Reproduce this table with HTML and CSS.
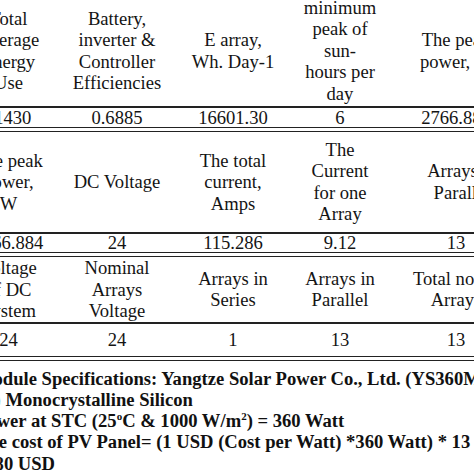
FILE: index.html
```html
<!DOCTYPE html>
<html>
<head>
<meta charset="utf-8">
<link rel="stylesheet" href="styles.css">
</head>
<body>
<div class="page">
  <div class="sheet">
    <div class="tbl t1">
      <div class="c h k0">Total Average Energy Use</div>
      <div class="c h k1">Battery, inverter &amp; Controller Efficiencies</div>
      <div class="c h k2">E array, Wh. Day-1</div>
      <div class="c h k3">minimum peak of sun-hours per day</div>
      <div class="c h k4">The peak power, W</div>
      <div class="rule"></div>
      <div class="c v k0">11430</div>
      <div class="c v k1">0.6885</div>
      <div class="c v k2">16601.30</div>
      <div class="c v k3">6</div>
      <div class="c v k4">2766.884</div>
      <div class="rule2"></div>
    </div>
    <div class="tbl t2">
      <div class="c h k0">The peak power, W</div>
      <div class="c h k1">DC Voltage</div>
      <div class="c h k2">The total current, Amps</div>
      <div class="c h k3">The Current for one Array</div>
      <div class="c h k4 shift">Arrays in Parallel</div>
      <div class="rule"></div>
      <div class="c v k0">2766.884</div>
      <div class="c v k1">24</div>
      <div class="c v k2">115.286</div>
      <div class="c v k3">9.12</div>
      <div class="c v k4">13</div>
      <div class="rule2"></div>
    </div>
    <div class="tbl t3">
      <div class="c h k0">Voltage of DC System</div>
      <div class="c h k1">Nominal Arrays Voltage</div>
      <div class="c h k2">Arrays in Series</div>
      <div class="c h k3">Arrays in Parallel</div>
      <div class="c h k4">Total no. of Arrays</div>
      <div class="rule"></div>
      <div class="c v k0">24</div>
      <div class="c v k1">24</div>
      <div class="c v k2">1</div>
      <div class="c v k3">13</div>
      <div class="c v k4">13</div>
      <div class="rule2"></div>
    </div>
  </div>
  <div class="notes">
    <div class="line">Module Specifications: Yangtze Solar Power Co., Ltd. (YS360M-</div>
    <div class="line">72) Monocrystalline Silicon</div>
    <div class="line">Power at STC (25<sup>o</sup>C &amp; 1000 W/m<sup>2</sup>) = 360 Watt</div>
    <div class="line">The cost of PV Panel= (1 USD (Cost per Watt) *360 Watt) * 13 = </div>
    <div class="line">4680 USD</div>
  </div>
</div>
</body>
</html>
```

FILE: styles.css
```css
html, body {
  margin: 0;
  padding: 0;
  background: #ffffff;
}

.page {
  width: 474px;
  height: 474px;
  overflow: hidden;
  background: #ffffff;
  color: #141414;
  font-family: "Liberation Serif", "Times New Roman", serif;
  font-size: 18.6px;
  line-height: 21.5px;
}

.sheet {
  margin-left: -37.5px;
  margin-top: -5px;
  width: 560px;
}

.tbl {
  display: grid;
  grid-template-columns: 92px 125px 107px 107px 125px;
}

.t1 { grid-template-rows: 111px 1.5px 19.5px 4.5px; }
.t2 { grid-template-rows: 100.5px 1.5px 18.5px 4.5px; }
.t3 { grid-template-rows: 65.5px 1.5px 32.5px 4.5px; }

.c {
  display: flex;
  align-items: center;
  justify-content: center;
  text-align: center;
}

.k0 { padding: 0 10.5px; }
.k1 { padding: 0 10px; }
.k2 { padding: 0 10px; }
.k3 { padding: 0 17.1px; }
.k4 { padding: 0 12px; }
.k4.shift { padding: 0 0 0 12px; }

.rule {
  grid-column: 1 / -1;
  background: #222222;
}

.rule2 {
  grid-column: 1 / -1;
  border-top: 1.5px solid #222222;
  border-bottom: 1.5px solid #222222;
  box-sizing: border-box;
}

.notes {
  margin-top: 7px;
  margin-left: -24px;
  font-weight: bold;
  line-height: 21.3px;
  color: #111111;
}

.line {
  white-space: nowrap;
}

.notes sup {
  font-size: 11px;
  line-height: 0;
  vertical-align: 7px;
}
```
